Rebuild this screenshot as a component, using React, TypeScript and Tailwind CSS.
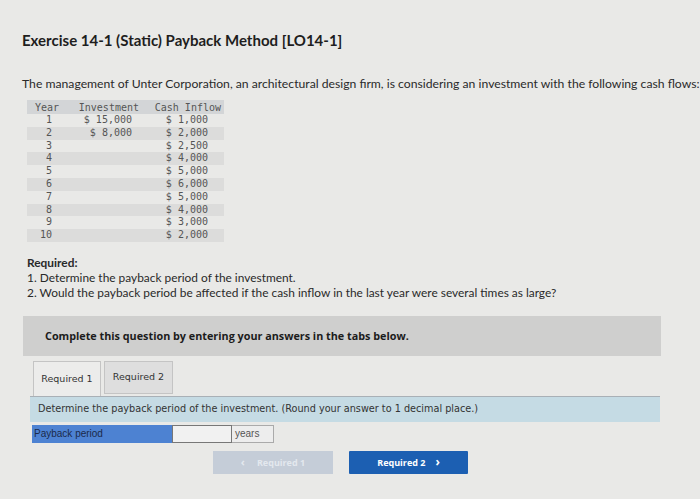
import React from 'react'

const rows = [
  { year: 1, inv: '$ 15,000', cash: '$ 1,000' },
  { year: 2, inv: '$ 8,000', cash: '$ 2,000' },
  { year: 3, inv: '', cash: '$ 2,500' },
  { year: 4, inv: '', cash: '$ 4,000' },
  { year: 5, inv: '', cash: '$ 5,000' },
  { year: 6, inv: '', cash: '$ 6,000' },
  { year: 7, inv: '', cash: '$ 5,000' },
  { year: 8, inv: '', cash: '$ 4,000' },
  { year: 9, inv: '', cash: '$ 3,000' },
  { year: 10, inv: '', cash: '$ 2,000' },
]

export default function App() {
  return (
    <div className="w-[700px] h-[499px] overflow-hidden bg-[#e9e9e7] text-[#222] font-['Lato',sans-serif]">
      {/* Titel */}
      <h1 className="pl-[22px] pt-[30px] text-[15px] font-bold leading-[20px] text-[#1e1e1e]">
        Exercise 14-1 (Static) Payback Method [LO14-1]
      </h1>

      <p className="pl-[22px] pt-[26px] text-[12.2px] leading-[16px] text-[#2a2a2a] whitespace-nowrap">
        The management of Unter Corporation, an architectural design firm, is considering an investment with the following cash flows:
      </p>

      {/* Tabel */}
      <div className="ml-[27px] mt-[8px] w-[197px] font-['DejaVu_Sans_Mono',monospace] text-[10px] text-[#555]">
        <div className="flex h-[14px] items-center bg-[#d3d5d7]">
          <span className="w-[40px] pl-[8px]">Year</span>
          <span className="w-[72px] text-right">Investment</span>
          <span className="flex-1 pr-[3px] text-right">Cash Inflow</span>
        </div>
        {rows.map((r, i) => (
          <div
            key={r.year}
            className={`flex h-[12.8px] items-center leading-[12.8px] ${i % 2 === 1 ? 'bg-[#dcdcdb]' : ''}`}
          >
            <span className="w-[25px] text-right">{r.year}</span>
            <span className="w-[80px] text-right">{r.inv}</span>
            <span className="w-[76px] text-right">{r.cash}</span>
          </div>
        ))}
      </div>

      {/* Opgaver */}
      <div className="pl-[27px] pt-[13px] text-[11.9px] leading-[15px] text-[#2a2a2a]">
        <p className="font-bold">Required:</p>
        <p>1. Determine the payback period of the investment.</p>
        <p>2. Would the payback period be affected if the cash inflow in the last year were several times as large?</p>
      </div>

      <div className="ml-[23px] mt-[16px] w-[638px] h-[40px] bg-[#cfcfce] flex items-center pl-[22px] font-['Open_Sans',sans-serif] text-[10.8px] font-bold text-[#1c1c1c]">
        Complete this question by entering your answers in the tabs below.
      </div>

      {/* Faner */}
      <div className="ml-[33px] mt-[5px] flex gap-[3px] font-['DejaVu_Sans',sans-serif] text-[9.5px] text-[#333]">
        <div className="w-[68px] h-[35px] border border-[#c4c4c4] border-b-0 bg-[#ececeb] flex items-center justify-center">
          Required 1
        </div>
        <div className="w-[69px] h-[33px] border border-[#c4c4c4] bg-[#dedede] flex items-center justify-center">
          Required 2
        </div>
      </div>

      <div className="ml-[30px] w-[630px] h-[26px] bg-[#c5dbe4] border-t border-[#a9b0b6] flex items-center pl-[8px] font-['DejaVu_Sans',sans-serif] text-[9.7px] text-[#333]">
        Determine the payback period of the investment. (Round your answer to 1 decimal place.)
      </div>

      <div className="ml-[32px] mt-[3px] flex h-[18px] font-['Liberation_Sans',sans-serif] text-[10px]">
        <div className="w-[140px] bg-[#4d82d2] text-[#1b2a4a] flex items-center pl-[2px]">Payback period</div>
        <div className="w-[60px] bg-[#f1f1f1] border border-[#777]"></div>
        <div className="w-[42px] bg-[#ededed] border border-[#aaa] border-l-0 flex items-center pl-[3px] text-[#555]">years</div>
      </div>

      {/* Knapper */}
      <div className="mt-[8px] ml-[213px] flex gap-[16px] font-['Open_Sans',sans-serif] text-[9px] font-bold">
        <div className="w-[120px] h-[23px] bg-[#c5cdd8] text-[#e3e8ee] flex items-center justify-center gap-[12px]">
          <span className="text-[11px]">‹</span>
          <span>Required 1</span>
        </div>
        <div className="w-[119px] h-[23px] bg-[#1c5fb2] text-white rounded-[1px] flex items-center justify-center gap-[10px]">
          <span>Required 2</span>
          <span className="text-[12px]">›</span>
        </div>
      </div>
    </div>
  )
}
